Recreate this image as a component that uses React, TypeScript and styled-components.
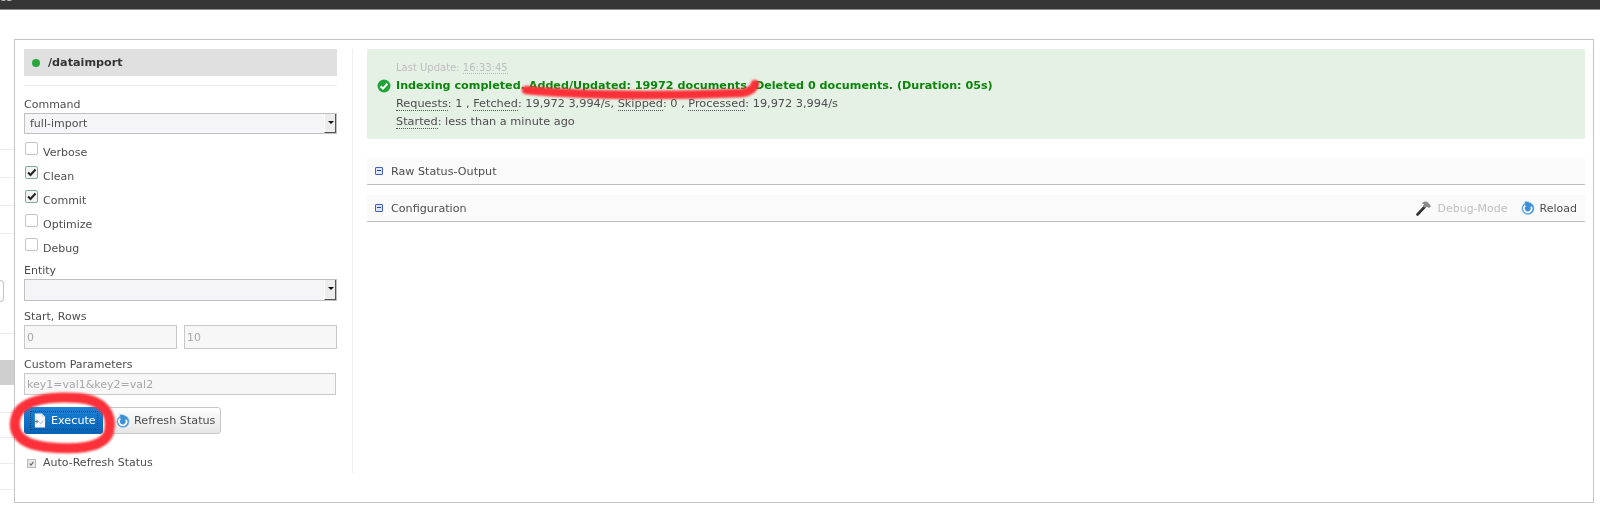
import React from "react";
import styled, { createGlobalStyle } from "styled-components";

const GlobalStyle = createGlobalStyle`
  html, body {
    margin: 0;
    padding: 0;
    background: #fff;
    height: 507px;
    overflow: hidden;
  }
  body {
    font-family: "DejaVu Sans", sans-serif;
    font-size: 11px;
    color: #4d4d4d;
  }
`;

const commands = ["Verbose", "Clean", "Commit", "Optimize", "Debug"];
const checked = ["Clean", "Commit"];

const RefreshIcon = () => (
  <svg width="14" height="14" viewBox="0 0 16 16">
    <circle cx="8" cy="8.5" r="7" fill="#3d8fd8" />
    <circle cx="8" cy="8.5" r="7" fill="none" stroke="#9cc8ec" strokeWidth="0.8" />
    <path d="M5 5.2 A4.3 4.3 0 1 0 11.5 6.5" fill="none" stroke="#fff" strokeWidth="2" />
    <path d="M3.6 0.6 L9 0.8 L8 6 Z" fill="#3d8fd8" />
  </svg>
);

const App = () => {
  return (
    <>
      <GlobalStyle />
      <Page>
        <TopBar>
          <TopText>os</TopText>
        </TopBar>
        <Content>
          <NavRail>
            <NavLine $height={28} $first />
            <NavLine $height={28} />
            <NavLine $height={28} />
            <NavLine $height={28} />
            <NavButton />
            <NavLine $height={32} />
            <NavActive />
            <NavLine $height={28} />
            <NavLine $height={25} />
            <NavLine $height={26} />
            <NavLine $height={26} />
          </NavRail>
          <Panel>
            <Sidebar>
              <Handler>
                <Dot />
                /dataimport
              </Handler>
              <Rule />
              <Label $top={12}>Command</Label>
              <FakeSelect $height={21}>
                <span>full-import</span>
                <SelectArrow />
              </FakeSelect>
              <Checks>
                {commands.map((name) => (
                  <CheckRow key={name}>
                    <Box $on={checked.includes(name)}>
                      {checked.includes(name) && (
                        <svg width="11" height="11" viewBox="0 0 11 11">
                          <path d="M2 5.5 L4.5 8 L9.5 2.5" fill="none" stroke="#222" strokeWidth="2" />
                        </svg>
                      )}
                    </Box>
                    <span>{name}</span>
                  </CheckRow>
                ))}
              </Checks>
              <Label $top={5}>Entity</Label>
              <FakeSelect $height={22}>
                <span />
                <SelectArrow />
              </FakeSelect>
              <Label $top={9}>Start, Rows</Label>
              <InputRow>
                <Field $height={24} readOnly placeholder="0" />
                <Field $height={24} readOnly placeholder="10" />
              </InputRow>
              <Label $top={9}>Custom Parameters</Label>
              <ParamField $height={22} readOnly placeholder="key1=val1&key2=val2" />
              <Buttons>
                <ExecuteButton>
                  <FocusRing>
                    <svg width="13" height="15" viewBox="0 0 14 16">
                      <path d="M2 0.5 H9.5 L13 4 V15.5 H2 Z" fill="#f4f7fa" />
                      <path d="M9.5 0.5 V4 H13" fill="#c4d6e6" />
                      <path d="M0 9 H5 M3.5 7 L5.5 9 L3.5 11" fill="none" stroke="#4a6f8f" strokeWidth="1" />
                      <path d="M7 10 L8.5 11.5 L11 8" fill="none" stroke="#9ab0c0" strokeWidth="0.8" />
                    </svg>
                    Execute
                  </FocusRing>
                </ExecuteButton>
                <RefreshButton>
                  <RefreshIcon />
                  Refresh Status
                </RefreshButton>
              </Buttons>
              <AutoRow>
                <SmallBox>
                  <svg width="9" height="9" viewBox="0 0 9 9">
                    <path d="M2 4.5 L3.8 6.5 L7 2.5" fill="none" stroke="#666" strokeWidth="1.4" />
                  </svg>
                </SmallBox>
                Auto-Refresh Status
              </AutoRow>
            </Sidebar>
            <Main>
              <StatusBox>
                <LastUpdate>
                  Last Update: <Dotted $light>16:33:45</Dotted>
                </LastUpdate>
                <Headline>
                  <StatusIcon>
                    <svg width="14" height="14" viewBox="0 0 14 14">
                      <circle cx="7" cy="7" r="6.5" fill="#1ea535" />
                      <path d="M3.6 7.2 L6 9.6 L10.4 4.8" fill="none" stroke="#fff" strokeWidth="2.1" />
                    </svg>
                  </StatusIcon>
                  Indexing completed. Added/Updated: 19972 documents. Deleted 0 documents. (Duration: 05s)
                </Headline>
                <Detail>
                  <Dotted>Requests</Dotted>: 1 , <Dotted>Fetched</Dotted>: 19,972 3,994/s, <Dotted>Skipped</Dotted>: 0 , <Dotted>Processed</Dotted>: 19,972 3,994/s
                </Detail>
                <Detail>
                  <Dotted>Started</Dotted>: less than a minute ago
                </Detail>
              </StatusBox>
              <Section $top={19}>
                <Toggle />
                <SectionTitle>Raw Status-Output</SectionTitle>
              </Section>
              <Section $top={10}>
                <Toggle />
                <SectionTitle>Configuration</SectionTitle>
                <SectionActions>
                  <ActionItem $muted>
                    <svg width="16" height="16" viewBox="0 0 16 16">
                      <path d="M1.5 14.5 L9 6.5" stroke="#333" strokeWidth="2.6" strokeLinecap="round" />
                      <path d="M5.5 3.5 C8 1 10.5 1 12 2.5 L15 6 L13 8 L10.5 6.5 L9 8 L7 6 L8 4.5 C7.5 3.8 6.5 3.5 5.5 3.5 Z" fill="#8a8a8a" />
                    </svg>
                    Debug-Mode
                  </ActionItem>
                  <ActionItem>
                    <RefreshIcon />
                    Reload
                  </ActionItem>
                </SectionActions>
              </Section>
            </Main>
          </Panel>
        </Content>
        <Scribble width="1600" height="507" viewBox="0 0 1600 507">
          <path
            d="M78 398 C50 396 24 400 17 414 C10 432 20 444 46 447 C72 450 104 449 109 432 C113 414 104 400 78 398 Z"
            fill="none"
            stroke="#fb3038"
            strokeWidth="10"
          />
          <path
            d="M526 90 C600 97 690 95 742 93 C750 92 754 88 755 84"
            fill="none"
            stroke="#fb3038"
            strokeWidth="8.5"
            strokeLinecap="round"
          />
        </Scribble>
      </Page>
    </>
  );
};

const Page = styled.div`
  position: relative;
  width: 1600px;
  height: 507px;
  overflow: hidden;
  filter: blur(0.3px);
`;

const TopBar = styled.div`
  height: 9px;
  background: #363636;
  border-bottom: 1px solid #8c8c8c;
  overflow: hidden;
`;

const TopText = styled.div`
  color: #ccc;
  font-size: 11px;
  line-height: 11px;
  margin-top: -8px;
`;

const Content = styled.div`
  display: flex;
`;

const NavRail = styled.div`
  width: 14px;
  flex: none;
  display: flex;
  flex-direction: column;
`;

const NavLine = styled.div<{ $height: number; $first?: boolean }>`
  height: ${(p) => p.$height}px;
  box-sizing: border-box;
  border-bottom: 1px solid #ececec;
  margin-top: ${(p) => (p.$first ? 112 : 0)}px;
`;

const NavButton = styled.div`
  width: 4px;
  height: 22px;
  box-sizing: border-box;
  margin-top: 46px;
  border: 1px solid #c4c4c4;
  border-left: none;
  border-radius: 0 4px 4px 0;
`;

const NavActive = styled.div`
  height: 25px;
  margin-top: 26px;
  background: #cfcfcf;
`;

const Panel = styled.div`
  display: flex;
  box-sizing: border-box;
  width: 1580px;
  height: 464px;
  margin-top: 29px;
  padding: 9px 8px 0 9px;
  border: 1px solid #c4c4c4;
`;

const Sidebar = styled.div`
  width: 313px;
  flex: none;
  box-sizing: content-box;
  height: 424px;
  padding-right: 15px;
  border-right: 1px solid #f0f0f0;
  display: flex;
  flex-direction: column;
`;

const Handler = styled.div`
  display: flex;
  align-items: center;
  height: 27px;
  background: #e0e0e0;
  font-weight: bold;
  font-size: 11.2px;
  color: #333;
  padding-left: 8px;
`;

const Dot = styled.span`
  width: 8px;
  height: 8px;
  border-radius: 50%;
  background: #27a83a;
  margin-right: 8px;
`;

const Rule = styled.div`
  height: 1px;
  background: #eee;
  margin-top: 9px;
`;

const Label = styled.div<{ $top: number }>`
  line-height: 14px;
  margin-top: ${(p) => p.$top}px;
  margin-bottom: 1px;
`;

const FakeSelect = styled.div<{ $height: number }>`
  display: flex;
  justify-content: space-between;
  align-items: center;
  box-sizing: border-box;
  height: ${(p) => p.$height}px;
  background: #f5f5f7;
  border: 1px solid #c0c0c0;
  padding-left: 5px;
`;

const SelectArrow = styled.div`
  position: relative;
  width: 12px;
  height: 100%;
  box-sizing: border-box;
  background: #ececec;
  border-right: 1px solid #555;
  border-bottom: 1px solid #555;
  border-left: 1px solid #fff;

  &::after {
    content: "";
    position: absolute;
    left: 3px;
    top: 7px;
    border: 3px solid transparent;
    border-top: 3px solid #111;
  }
`;

const Checks = styled.div`
  margin-top: 5px;
`;

const CheckRow = styled.div`
  display: flex;
  align-items: flex-start;
  height: 24px;
  line-height: 14px;
  gap: 5px;
  padding: 7px 0 0 1px;
  box-sizing: border-box;
`;

const Box = styled.div<{ $on: boolean }>`
  display: flex;
  align-items: center;
  justify-content: center;
  width: 13px;
  height: 13px;
  box-sizing: border-box;
  margin-top: -4px;
  border: 1px solid ${(p) => (p.$on ? "#7fa89c" : "#c4c4c4")};
  border-radius: 2px;
  background: ${(p) => (p.$on ? "#f0f5f3" : "#fff")};
`;

const InputRow = styled.div`
  display: flex;
  gap: 7px;
`;

const Field = styled.input<{ $height: number }>`
  display: block;
  width: 153px;
  height: ${(p) => p.$height}px;
  box-sizing: border-box;
  padding: 0 2px;
  background: #f7f7f7;
  border: 1px solid #c8c8c8;
  border-radius: 0;
  outline: none;
  font-family: inherit;
  font-size: 11px;

  &::placeholder {
    color: #a8a8a8;
    opacity: 1;
  }
`;

const ParamField = styled(Field)`
  width: 312px;
`;

const Buttons = styled.div`
  display: flex;
  gap: 4px;
  margin-top: 12px;
  font-size: 11.2px;
`;

const ExecuteButton = styled.div`
  display: flex;
  align-items: center;
  padding-left: 6px;
  width: 79px;
  height: 27px;
  box-sizing: border-box;
  border-radius: 3px;
  background: linear-gradient(#1b82d6, #0662b4);
  color: #fff;
`;

const FocusRing = styled.div`
  display: flex;
  align-items: center;
  gap: 5px;
  height: 17px;
  padding: 0 1px 0 2px;
  border: 1px dotted #0a3a66;
`;

const RefreshButton = styled.div`
  display: flex;
  align-items: center;
  gap: 4px;
  width: 114px;
  height: 27px;
  box-sizing: border-box;
  padding-left: 8px;
  border: 1px solid #c8c8c8;
  border-radius: 3px;
  background: linear-gradient(#fff, #e6e6e6);
`;

const AutoRow = styled.div`
  display: flex;
  align-items: center;
  line-height: 14px;
  margin-top: 22px;
  padding-left: 3px;
  gap: 7px;
`;

const SmallBox = styled.div`
  display: flex;
  align-items: center;
  justify-content: center;
  width: 9px;
  height: 9px;
  box-sizing: border-box;
  background: #e8e8e8;
  border: 1px solid #bbb;
`;

const Main = styled.div`
  flex: 1;
  margin-left: 14px;
  display: flex;
  flex-direction: column;
`;

const StatusBox = styled.div`
  height: 90px;
  box-sizing: border-box;
  padding: 12px 0 0 29px;
  background: #e6f1e6;
`;

const LastUpdate = styled.div`
  font-size: 10px;
  line-height: 14px;
  color: #bdbdbd;
`;

const Headline = styled.div`
  position: relative;
  margin-top: 4px;
  line-height: 14px;
  font-size: 11.17px;
  font-weight: bold;
  color: #0b860b;
`;

const StatusIcon = styled.span`
  position: absolute;
  left: -19px;
  top: 0;
`;

const Detail = styled.div`
  margin-top: 4px;
  line-height: 14px;
  font-size: 11.3px;
`;

const Dotted = styled.span<{ $light?: boolean }>`
  border-bottom: 1px dotted ${(p) => (p.$light ? "#bbb" : "#555")};
`;

const Section = styled.div<{ $top: number }>`
  display: flex;
  align-items: center;
  height: 27px;
  box-sizing: border-box;
  margin-top: ${(p) => p.$top}px;
  padding-left: 8px;
  background: #fafafa;
  border-bottom: 1px solid #bdbdbd;
`;

const Toggle = styled.span`
  position: relative;
  width: 8px;
  height: 8px;
  box-sizing: border-box;
  border: 1px solid #3f5fc0;
  border-radius: 1px;
  background: #dfe6fa;

  &::after {
    content: "";
    position: absolute;
    left: 1px;
    right: 1px;
    top: 2px;
    height: 1px;
    background: #2a3f90;
  }
`;

const SectionTitle = styled.span`
  margin-left: 8px;
  font-size: 11.15px;
`;

const SectionActions = styled.div`
  display: flex;
  align-items: center;
  gap: 13px;
  margin-left: auto;
  padding-right: 8px;
`;

const ActionItem = styled.span<{ $muted?: boolean }>`
  display: flex;
  align-items: center;
  gap: ${(p) => (p.$muted ? 5 : 5)}px;
  color: ${(p) => (p.$muted ? "#c0c0c0" : "#4d4d4d")};
`;

const Scribble = styled.svg`
  position: absolute;
  left: 0;
  top: 0;
  pointer-events: none;
  filter: blur(0.8px);
`;

export default App;
